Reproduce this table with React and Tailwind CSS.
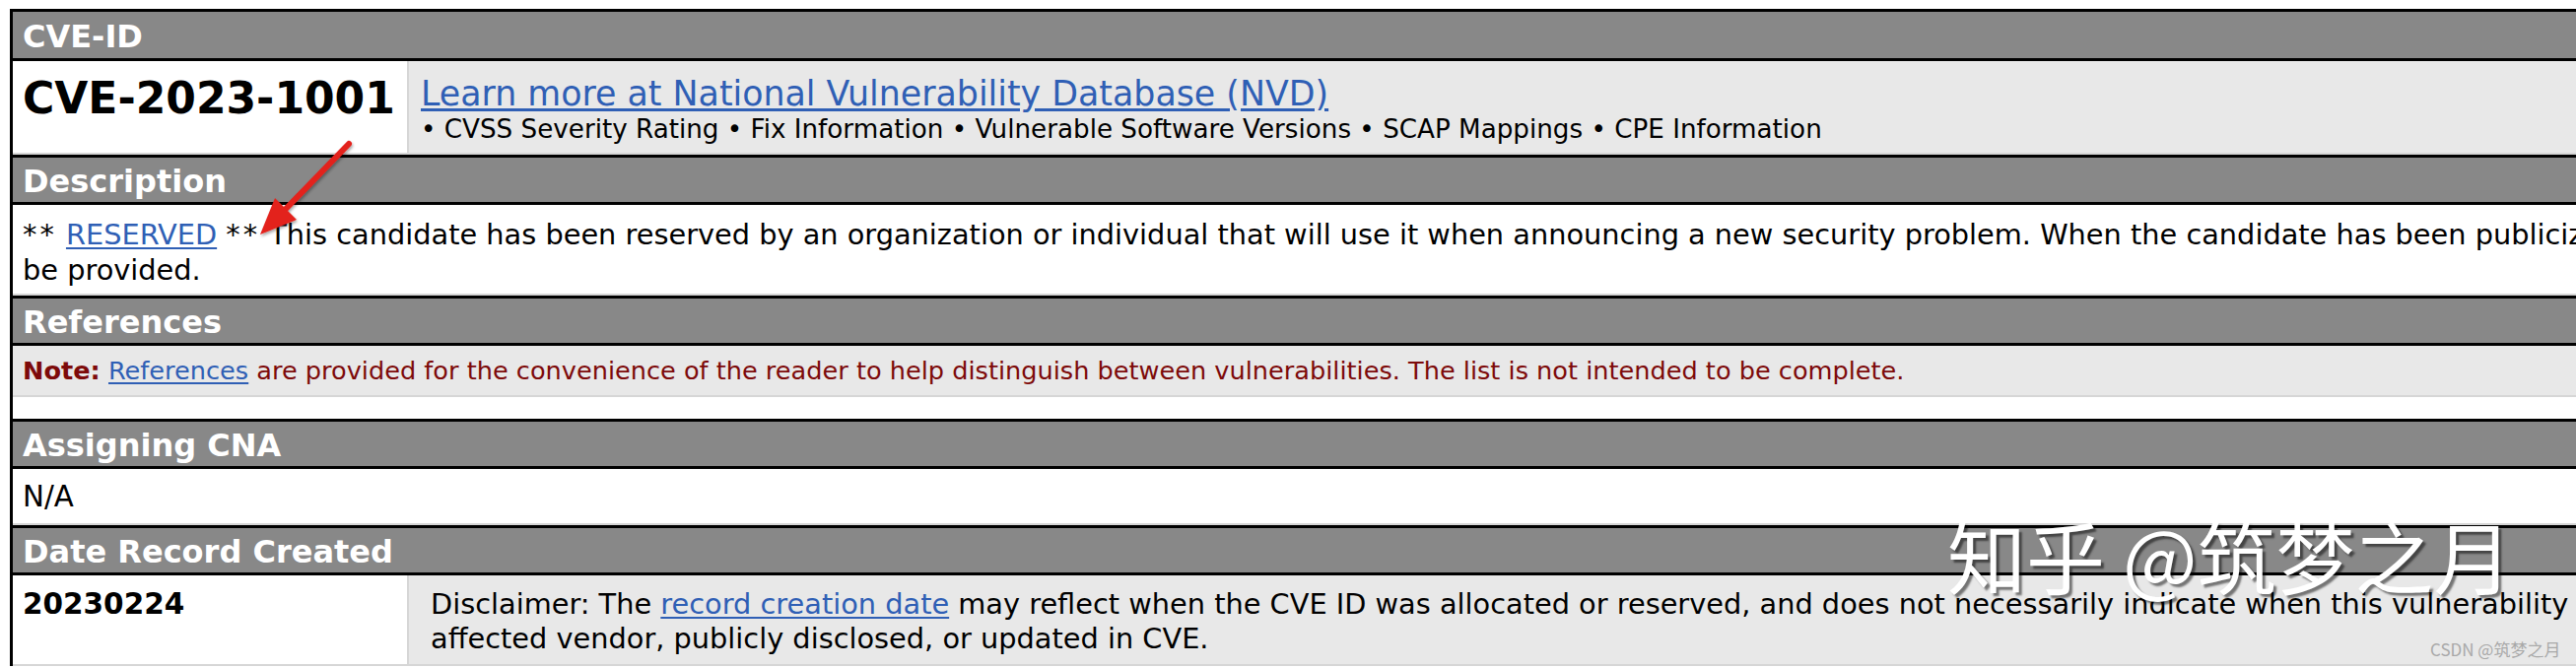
import React from "react";

function Header({ children, first }) {
  return (
    <div
      className={
        first
          ? "h-[50px] bg-[#888888] border-b-[3px] border-black flex items-center px-[10px] pt-[3px] text-white font-bold text-[32px] leading-none"
          : "h-[51px] bg-[#888888] border-t-[3px] border-b-[3px] border-black flex items-center px-[10px] pt-[2px] text-white font-bold text-[32px] leading-none"
      }
    >
      {children}
    </div>
  );
}

export default function App() {
  return (
    <div className="relative w-[2614px] h-[678px] overflow-hidden bg-white font-['DejaVu_Sans',sans-serif] text-black">
      <div className="pt-[9px] pl-[10px]">
        <div className="w-[3400px] border-l-[3px] border-t-[3px] border-black">
          <Header first>CVE-ID</Header>
          <div className="flex h-[95px] border-b-2 border-[#d6d6d6]">
            <div className="w-[400px] shrink-0 bg-white pl-[10px] pt-[16px] text-[44px] font-bold leading-[44px]">
              CVE-2023-1001
            </div>
            <div className="w-[2px] bg-[#d6d6d6]" />
            <div className="flex-1 bg-[#e8e8e8] pl-[12px] pt-[16px] whitespace-nowrap">
              <div className="text-[34.8px] leading-[34px]">
                <a className="text-[#2f5fb5] underline underline-offset-[3px]">
                  Learn more at National Vulnerability Database (NVD)
                </a>
              </div>
              <div className="mt-[4px] text-[26.2px] leading-[30px]">
                • CVSS Severity Rating • Fix Information • Vulnerable Software Versions • SCAP Mappings • CPE Information
              </div>
            </div>
          </div>
          <Header>Description</Header>
          <div className="h-[92px] border-b-2 border-[#d6d6d6] bg-white px-[10px] pt-[12px] text-[28.8px] leading-[36px] whitespace-nowrap">
            <span className="tracking-[3px]">**</span>{" "}
            <a className="text-[#2f5fb5] underline underline-offset-[3px]">RESERVED</a>{" "}
            <span className="tracking-[3px]">**</span> This candidate has been reserved by an organization or individual that will use it when announcing a new security problem. When the candidate has been publicized, the details for this candidate will
            <br />
            be provided.
          </div>
          <Header>References</Header>
          <div className="h-[52px] border-b-2 border-[#d6d6d6] bg-[#e8e8e8] px-[10px] flex items-center text-[25.6px] leading-[30px] text-[#7d0a0a] whitespace-nowrap">
            <span>
              <span className="font-bold">Note:</span>{" "}
              <a className="text-[#2f5fb5] underline underline-offset-[3px]">References</a> are provided for the convenience of the reader to help distinguish between vulnerabilities. The list is not intended to be complete.
            </span>
          </div>
          <div className="h-[22px] bg-white" />
          <Header>Assigning CNA</Header>
          <div className="h-[57px] border-b-2 border-[#d6d6d6] bg-white px-[10px] pt-[1px] flex items-center text-[29.3px] leading-[36px]">
            N/A
          </div>
          <Header>Date Record Created</Header>
          <div className="flex h-[92px] border-b-2 border-[#d6d6d6]">
            <div className="w-[400px] shrink-0 bg-white pl-[10px] pt-[11px] text-[29.5px] font-bold leading-[36px]">
              20230224
            </div>
            <div className="w-[2px] bg-[#d6d6d6]" />
            <div className="flex-1 bg-[#e8e8e8] pl-[22px] pr-[10px] pt-[12px] text-[28.8px] leading-[35px] whitespace-nowrap">
              Disclaimer: The{" "}
              <a className="text-[#2f5fb5] underline underline-offset-[3px]">record creation date</a> may reflect when the CVE ID was allocated or reserved, and does not necessarily indicate when this vulnerability was discovered, shared with the
              <br />
              affected vendor, publicly disclosed, or updated in CVE.
            </div>
          </div>
        </div>
      </div>

      <svg
        className="absolute left-0 top-0 pointer-events-none"
        width="400"
        height="260"
        viewBox="0 0 400 260"
      >
        <defs>
          <filter id="sh" x="-20%" y="-20%" width="140%" height="140%">
            <feDropShadow dx="1" dy="2" stdDeviation="1.5" floodColor="#000" floodOpacity="0.35" />
          </filter>
        </defs>
        <g filter="url(#sh)">
          <line x1="354" y1="146" x2="290" y2="212" stroke="#e3201b" strokeWidth="6" strokeLinecap="round" />
          <polygon points="264,238 279,201 301,223" fill="#e3201b" />
        </g>
      </svg>

      <div className="absolute left-[1976px] top-[522px] text-[80px] leading-none text-white font-['Noto_Sans_CJK_SC',sans-serif] [text-shadow:3px_3px_2px_rgba(0,0,0,0.5)] whitespace-nowrap">
        知乎 @筑梦之月
      </div>
      <div className="absolute left-[2466px] top-[650px] text-[17px] leading-none text-[#a8a8a8] font-['Noto_Sans_CJK_SC',sans-serif] whitespace-nowrap">
        CSDN @筑梦之月
      </div>
    </div>
  );
}
